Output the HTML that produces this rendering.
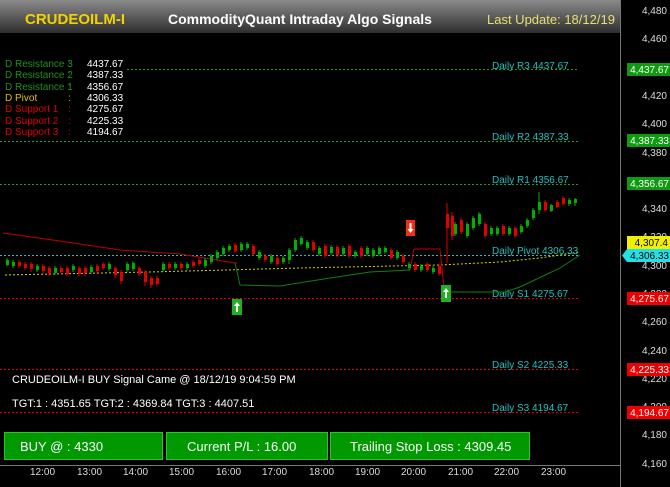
<!DOCTYPE html>
<html><head><meta charset="utf-8"><style>
body{margin:0;width:670px;height:487px;background:#000;overflow:hidden;font-family:"Liberation Sans",sans-serif}
svg{position:absolute;left:0;top:0}
</style></head><body>
<svg width="670" height="487" xmlns="http://www.w3.org/2000/svg" font-family="Liberation Sans, sans-serif">
<defs><linearGradient id="hg" x1="0" y1="0" x2="0" y2="1"><stop offset="0" stop-color="#8a8a8a"/><stop offset="1" stop-color="#2e2e2e"/></linearGradient></defs>
<rect x="0" y="0" width="621" height="33" fill="url(#hg)"/>
<text x="25" y="24" fill="#f2d200" font-size="15" font-weight="bold">CRUDEOILM-I</text>
<text x="168" y="24" fill="#fff" font-size="14" font-weight="bold">CommodityQuant Intraday Algo Signals</text>
<text x="487" y="24" fill="#e6e070" font-size="13">Last Update: 18/12/19</text>
<line x1="620.5" y1="0" x2="620.5" y2="487" stroke="#777"/>
<line x1="0" y1="465.5" x2="621" y2="465.5" stroke="#777"/>
<!-- legend -->
<g font-size="10">
<text x="5" y="67" fill="#1f8f1f">D Resistance 3</text><text x="68" y="67" fill="#1f8f1f">:</text><text x="87" y="67" fill="#fff">4437.67</text>
<text x="5" y="78" fill="#1f8f1f">D Resistance 2</text><text x="68" y="78" fill="#1f8f1f">:</text><text x="87" y="78" fill="#fff">4387.33</text>
<text x="5" y="90" fill="#1f8f1f">D Resistance 1</text><text x="68" y="90" fill="#1f8f1f">:</text><text x="87" y="90" fill="#fff">4356.67</text>
<text x="5" y="101" fill="#e0c000">D Pivot</text><text x="68" y="101" fill="#e0c000">:</text><text x="87" y="101" fill="#fff">4306.33</text>
<text x="5" y="112" fill="#e00000">D Support 1</text><text x="68" y="112" fill="#e00000">:</text><text x="87" y="112" fill="#fff">4275.67</text>
<text x="5" y="124" fill="#e00000">D Support 2</text><text x="68" y="124" fill="#e00000">:</text><text x="87" y="124" fill="#fff">4225.33</text>
<text x="5" y="135" fill="#e00000">D Support 3</text><text x="68" y="135" fill="#e00000">:</text><text x="87" y="135" fill="#fff">4194.67</text>
</g>
<!-- level lines -->
<g stroke-dasharray="2,2" stroke-width="1">
<line x1="127" y1="69.5" x2="578" y2="69.5" stroke="#1f9f1f"/>
<line x1="0" y1="141.5" x2="578" y2="141.5" stroke="#1f9f1f"/>
<line x1="0" y1="184.5" x2="578" y2="184.5" stroke="#1f9f1f"/>
<line x1="0" y1="255.5" x2="578" y2="255.5" stroke="#20c0c0"/>
<line x1="0" y1="298.5" x2="578" y2="298.5" stroke="#e00000"/>
<line x1="0" y1="369.5" x2="578" y2="369.5" stroke="#e00000"/>
<line x1="0" y1="412.5" x2="578" y2="412.5" stroke="#e00000"/>
<path d="M5 275 L150 272 L300 268 L440 265 L500 262 L540 258 L580 252" fill="none" stroke="#d8d000"/>
</g>
<g fill="#20c0c0" font-size="10">
<text x="492" y="69">Daily R3 4437.67</text>
<text x="492" y="140">Daily R2 4387.33</text>
<text x="492" y="183">Daily R1  4356.67</text>
<text x="492" y="254">Daily Pivot  4306.33</text>
<text x="492" y="297">Daily  S1 4275.67</text>
<text x="492" y="368">Daily  S2 4225.33</text>
<text x="492" y="411">Daily  S3 4194.67</text>
</g>
<!-- MA lines -->
<polyline points="3,233 60,241 120,250 180,254 235,263 237,263" fill="none" stroke="#c00000"/>
<polyline points="235,263 240,285 280,286 330,278 370,272 410,270" fill="none" stroke="#108010"/>
<polyline points="410,270 414,249 440,249 444,288" fill="none" stroke="#c00000"/>
<polyline points="444,288 446,292 505,292 520,287 560,268 580,255" fill="none" stroke="#108010"/>
<!-- candles -->
<g id="c" stroke-width="1">
<path stroke="#00b000" d="M7 258v8M13 260v8M37 264v8M55 266v9M73 264v8M91 265v9M109 262v9M127 262v10M133 261v10M163 262v10M175 262v8M187 262v8M205 258v10M211 254v10M217 250v10M223 246v10M229 244v8M241 242v10M247 242v8M259 250v10M271 254v10M283 256v8M289 248v16M295 238v14M301 236v10M307 240v10M319 246v10M331 245v10M343 246v10M355 250v8M367 246v10M373 248v10M379 246v10M385 246v8M397 250v10M409 262v8M421 264v8M433 266v8M455 222v14M467 222v16M473 216v14M479 212v14M491 226v10M497 226v10M509 226v10M521 224v10M527 218v10M533 208v12M539 192v22M551 204v8M569 198v8M575 198v8"/>
<path stroke="#e00000" d="M19 260v8M25 262v8M31 262v10M43 264v10M49 266v10M61 266v8M67 266v10M79 266v10M85 266v10M97 264v10M103 262v8M115 266v12M121 270v14M139 266v10M145 270v16M151 276v12M157 276v10M169 262v8M181 262v8M193 260v8M199 258v8M235 243v10M253 244v12M265 254v8M277 256v10M313 240v12M325 244v14M337 245v12M349 244v14M361 246v12M391 248v12M403 254v10M415 262v10M427 262v10M439 264v12M447 203v60M452 212v28M461 218v16M485 222v16M503 224v12M515 226v12M545 200v12M557 200v8M563 196v10"/>
</g>
<g>
<rect x="6" y="260" width="3" height="5" fill="#00b000"/><rect x="12" y="262" width="3" height="4" fill="#00b000"/><rect x="18" y="262" width="3" height="4" fill="#e00000"/><rect x="24" y="264" width="3" height="4" fill="#e00000"/><rect x="30" y="264" width="3" height="5" fill="#e00000"/><rect x="36" y="266" width="3" height="4" fill="#00b000"/><rect x="42" y="266" width="3" height="5" fill="#e00000"/><rect x="48" y="268" width="3" height="5" fill="#e00000"/><rect x="54" y="268" width="3" height="5" fill="#00b000"/><rect x="60" y="268" width="3" height="4" fill="#e00000"/><rect x="66" y="268" width="3" height="6" fill="#e00000"/><rect x="72" y="266" width="3" height="4" fill="#00b000"/><rect x="78" y="268" width="3" height="6" fill="#e00000"/><rect x="84" y="268" width="3" height="5" fill="#e00000"/><rect x="90" y="267" width="3" height="5" fill="#00b000"/><rect x="96" y="266" width="3" height="5" fill="#e00000"/><rect x="102" y="264" width="3" height="4" fill="#e00000"/><rect x="108" y="264" width="3" height="5" fill="#00b000"/><rect x="114" y="268" width="3" height="7" fill="#e00000"/><rect x="120" y="272" width="3" height="9" fill="#e00000"/><rect x="126" y="264" width="3" height="6" fill="#00b000"/><rect x="132" y="263" width="3" height="6" fill="#00b000"/><rect x="138" y="268" width="3" height="6" fill="#e00000"/><rect x="144" y="272" width="3" height="10" fill="#e00000"/><rect x="150" y="278" width="3" height="7" fill="#e00000"/><rect x="156" y="278" width="3" height="6" fill="#e00000"/><rect x="162" y="264" width="3" height="6" fill="#00b000"/><rect x="168" y="264" width="3" height="4" fill="#e00000"/><rect x="174" y="264" width="3" height="4" fill="#00b000"/><rect x="180" y="264" width="3" height="4" fill="#e00000"/><rect x="186" y="264" width="3" height="4" fill="#00b000"/><rect x="192" y="262" width="3" height="4" fill="#e00000"/><rect x="198" y="260" width="3" height="4" fill="#e00000"/><rect x="204" y="260" width="3" height="6" fill="#00b000"/><rect x="210" y="256" width="3" height="6" fill="#00b000"/><rect x="216" y="252" width="3" height="6" fill="#00b000"/><rect x="222" y="248" width="3" height="6" fill="#00b000"/><rect x="228" y="246" width="3" height="4" fill="#00b000"/><rect x="234" y="245" width="3" height="6" fill="#e00000"/><rect x="240" y="244" width="3" height="6" fill="#00b000"/><rect x="246" y="244" width="3" height="4" fill="#00b000"/><rect x="252" y="246" width="3" height="8" fill="#e00000"/><rect x="258" y="252" width="3" height="6" fill="#00b000"/><rect x="264" y="256" width="3" height="4" fill="#e00000"/><rect x="270" y="256" width="3" height="6" fill="#00b000"/><rect x="276" y="258" width="3" height="6" fill="#e00000"/><rect x="282" y="258" width="3" height="4" fill="#00b000"/><rect x="288" y="250" width="3" height="10" fill="#00b000"/><rect x="294" y="240" width="3" height="10" fill="#00b000"/><rect x="300" y="238" width="3" height="6" fill="#00b000"/><rect x="306" y="242" width="3" height="6" fill="#00b000"/><rect x="312" y="242" width="3" height="8" fill="#e00000"/><rect x="318" y="248" width="3" height="6" fill="#00b000"/><rect x="324" y="246" width="3" height="10" fill="#e00000"/><rect x="330" y="247" width="3" height="6" fill="#00b000"/><rect x="336" y="247" width="3" height="8" fill="#e00000"/><rect x="342" y="248" width="3" height="6" fill="#00b000"/><rect x="348" y="246" width="3" height="10" fill="#e00000"/><rect x="354" y="252" width="3" height="4" fill="#00b000"/><rect x="360" y="248" width="3" height="8" fill="#e00000"/><rect x="366" y="248" width="3" height="6" fill="#00b000"/><rect x="372" y="250" width="3" height="6" fill="#00b000"/><rect x="378" y="248" width="3" height="6" fill="#00b000"/><rect x="384" y="248" width="3" height="4" fill="#00b000"/><rect x="390" y="250" width="3" height="8" fill="#e00000"/><rect x="396" y="252" width="3" height="6" fill="#00b000"/><rect x="402" y="256" width="3" height="6" fill="#e00000"/><rect x="408" y="264" width="3" height="4" fill="#00b000"/><rect x="414" y="264" width="3" height="6" fill="#e00000"/><rect x="420" y="266" width="3" height="4" fill="#00b000"/><rect x="426" y="264" width="3" height="6" fill="#e00000"/><rect x="432" y="268" width="3" height="4" fill="#00b000"/><rect x="438" y="266" width="3" height="8" fill="#e00000"/><rect x="446" y="214" width="3" height="14" fill="#e00000"/><rect x="451" y="216" width="3" height="20" fill="#e00000"/><rect x="454" y="224" width="3" height="10" fill="#00b000"/><rect x="460" y="220" width="3" height="12" fill="#e00000"/><rect x="466" y="224" width="3" height="12" fill="#00b000"/><rect x="472" y="218" width="3" height="10" fill="#00b000"/><rect x="478" y="214" width="3" height="10" fill="#00b000"/><rect x="484" y="224" width="3" height="12" fill="#e00000"/><rect x="490" y="228" width="3" height="6" fill="#00b000"/><rect x="496" y="228" width="3" height="6" fill="#00b000"/><rect x="502" y="226" width="3" height="8" fill="#e00000"/><rect x="508" y="228" width="3" height="6" fill="#00b000"/><rect x="514" y="228" width="3" height="8" fill="#e00000"/><rect x="520" y="226" width="3" height="6" fill="#00b000"/><rect x="526" y="220" width="3" height="6" fill="#00b000"/><rect x="532" y="210" width="3" height="8" fill="#00b000"/><rect x="538" y="202" width="3" height="8" fill="#00b000"/><rect x="544" y="202" width="3" height="8" fill="#e00000"/><rect x="550" y="205" width="3" height="6" fill="#00b000"/><rect x="556" y="202" width="3" height="5" fill="#e00000"/><rect x="562" y="198" width="3" height="6" fill="#e00000"/><rect x="568" y="200" width="3" height="4" fill="#00b000"/><rect x="574" y="199" width="3" height="4" fill="#00b000"/>
</g>
<!-- arrows -->
<rect x="232" y="299" width="10" height="16" fill="#20b020"/>
<path d="M237 302l-3 4h2v6h2v-6h2z" fill="#fff"/>
<rect x="406" y="220" width="9" height="16" fill="#f03010"/>
<path d="M410.5 233l-3-4h2v-6h2v6h2z" fill="#fff"/>
<rect x="441" y="285" width="10" height="17" fill="#20b020"/>
<path d="M446 288l-3 4h2v6h2v-6h2z" fill="#fff"/>
<!-- signal text -->
<text x="12" y="383" fill="#fff" font-size="11">CRUDEOILM-I  BUY Signal Came @  18/12/19 9:04:59 PM</text>
<text x="12" y="407" fill="#fff" font-size="11">TGT:1 : 4351.65  TGT:2 : 4369.84  TGT:3 : 4407.51</text>
<!-- buttons -->
<g stroke="#30c030" fill="#009a00">
<rect x="4.5" y="432.5" width="158" height="27"/>
<rect x="166.5" y="432.5" width="161" height="27"/>
<rect x="330.5" y="432.5" width="199" height="27"/>
</g>
<g fill="#fff" font-size="13">
<text x="20" y="451">BUY @  : 4330</text>
<text x="187" y="451">Current P/L : 16.00</text>
<text x="350" y="451">Trailing Stop Loss : 4309.45</text>
</g>
<!-- x axis -->
<g fill="#ddd" font-size="10" stroke="#999">
<text x="30" y="475" stroke="none">12:00</text><text x="77" y="475" stroke="none">13:00</text><text x="123" y="475" stroke="none">14:00</text><text x="169" y="475" stroke="none">15:00</text><text x="216" y="475" stroke="none">16:00</text><text x="262" y="475" stroke="none">17:00</text><text x="309" y="475" stroke="none">18:00</text><text x="355" y="475" stroke="none">19:00</text><text x="401" y="475" stroke="none">20:00</text><text x="448" y="475" stroke="none">21:00</text><text x="494" y="475" stroke="none">22:00</text><text x="541" y="475" stroke="none">23:00</text>
</g>
<!-- y axis -->
<g fill="#ddd" font-size="10" text-anchor="end">
<text x="667" y="14">4,480</text><text x="667" y="42">4,460</text><text x="667" y="71">4,440</text><text x="667" y="99">4,420</text><text x="667" y="127">4,400</text><text x="667" y="156">4,380</text><text x="667" y="184">4,360</text><text x="667" y="212">4,340</text><text x="667" y="240">4,320</text><text x="667" y="269">4,300</text><text x="667" y="297">4,280</text><text x="667" y="325">4,260</text><text x="667" y="354">4,240</text><text x="667" y="382">4,220</text><text x="667" y="410">4,200</text><text x="667" y="438">4,180</text><text x="667" y="467">4,160</text>
</g>
<g font-size="10" text-anchor="end">
<rect x="627" y="63" width="43" height="13" fill="#109a10"/><text x="669" y="73" fill="#fff">4,437.67</text>
<rect x="627" y="134" width="43" height="13" fill="#109a10"/><text x="669" y="144" fill="#fff">4,387.33</text>
<rect x="627" y="177" width="43" height="13" fill="#109a10"/><text x="669" y="187" fill="#fff">4,356.67</text>
<rect x="627" y="236" width="43" height="13" fill="#f0f000"/><text x="668" y="246" fill="#000">4,307.4</text>
<path d="M627 249h43v13h-43l-5-6.5z" fill="#20e0e8"/><text x="669" y="259" fill="#000">4,306.33</text>
<rect x="627" y="292" width="43" height="13" fill="#ee0000"/><text x="669" y="302" fill="#fff">4,275.67</text>
<rect x="627" y="363" width="43" height="13" fill="#ee0000"/><text x="669" y="373" fill="#fff">4,225.33</text>
<rect x="627" y="406" width="43" height="13" fill="#ee0000"/><text x="669" y="416" fill="#fff">4,194.67</text>
</g>
</svg>
</body></html>
